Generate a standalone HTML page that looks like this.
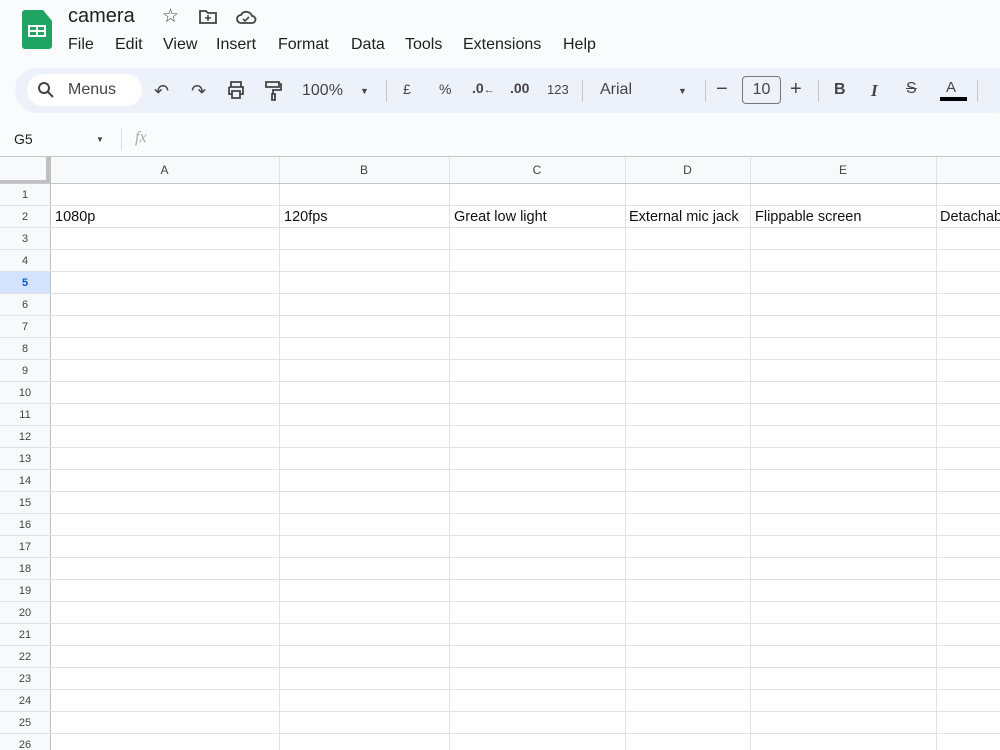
<!DOCTYPE html>
<html><head><meta charset="utf-8"><style>
*{margin:0;padding:0;box-sizing:border-box}
html,body{width:1000px;height:750px;overflow:hidden}
body{background:#f9fbfd;font-family:"Liberation Sans",Arial,sans-serif;color:#1f1f1f;position:relative}
.abs{position:absolute}
.tb{left:15px;top:68px;width:1000px;height:45px;background:#edf2fa;border-radius:22px}
.ic{position:absolute;color:#444;font-size:16px}
.grid{left:0;top:156px;width:1000px;height:594px;background:#fff;overflow:hidden}
.vl{position:absolute;top:0;width:1px;background:#e1e1e1;height:594px}
.hl{position:absolute;left:0;width:1000px;height:1px;background:#e1e1e1}
.rn{position:absolute;left:0;width:50px;text-align:center;font-size:11px;color:#444;height:22px;line-height:22px}
.cl{position:absolute;top:0;height:28px;line-height:28px;text-align:center;font-size:12px;color:#444}
.cell{position:absolute;top:50px;font-size:14.5px;height:22px;line-height:22px;color:#111;white-space:nowrap}
</style></head><body>
<div class="abs" style="left:22px;top:10px;width:30px;height:39px;background:#1fa463;border-radius:3px;clip-path:polygon(0 0,70% 0,100% 28%,100% 100%,0 100%)"></div>
<div class="abs" style="left:28px;top:25px;width:18px;height:12px;border:2px solid #fff;background:linear-gradient(#fff,#fff) 50% 0/2px 100% no-repeat,linear-gradient(#fff,#fff) 0 50%/100% 2px no-repeat"></div>
<div class="abs" style="left:68px;top:5px;font-size:20px;color:#1f1f1f">camera</div>
<div class="abs" style="left:162px;top:5px;font-size:19px;color:#444">☆</div>
<svg class="abs" style="left:198px;top:9px" width="20" height="16" viewBox="0 0 20 16"><path d="M2 2h6l2 2h8v10H2z" fill="none" stroke="#444" stroke-width="1.8"/><path d="M10 6v6M7 9h6" stroke="#444" stroke-width="1.6"/></svg>
<svg class="abs" style="left:235px;top:9px" width="22" height="16" viewBox="0 0 22 16"><path d="M6 14a4 4 0 0 1 0-8 6 6 0 0 1 11 1 3.5 3.5 0 0 1 0 7z" fill="none" stroke="#444" stroke-width="1.8"/><path d="M8 10l2 2 4-4" fill="none" stroke="#444" stroke-width="1.6"/></svg>
<div class="abs" style="left:68px;top:36px;font-size:16px;color:#1f1f1f">
<span class="abs" style="left:0">File</span><span class="abs" style="left:47px">Edit</span><span class="abs" style="left:95px">View</span><span class="abs" style="left:148px">Insert</span><span class="abs" style="left:210px">Format</span><span class="abs" style="left:283px">Data</span><span class="abs" style="left:337px">Tools</span><span class="abs" style="left:395px;white-space:nowrap">Extensions</span><span class="abs" style="left:495px">Help</span></div>
<div class="abs tb"></div>
<div class="abs" style="left:27px;top:74px;width:115px;height:32px;background:#fff;border-radius:16px"></div>
<svg class="abs" style="left:37px;top:81px" width="18" height="18" viewBox="0 0 18 18"><circle cx="7" cy="7" r="5" fill="none" stroke="#444" stroke-width="2"/><path d="M11 11l5 5" stroke="#444" stroke-width="2"/></svg>
<div class="abs" style="left:68px;top:81px;font-size:16px;color:#444">Menus</div>
<div class="ic" style="left:154px;top:81px;font-size:18px">↶</div>
<div class="ic" style="left:191px;top:81px;font-size:18px">↷</div>
<svg class="abs" style="left:226px;top:80px" width="20" height="20" viewBox="0 0 20 20"><path d="M5 7V2h10v5M3 7h14v7h-3M6 14H3V7M6 11h8v7H6z" fill="none" stroke="#444" stroke-width="1.8"/></svg>
<svg class="abs" style="left:264px;top:80px" width="18" height="22" viewBox="0 0 18 22"><path d="M2 2h13v5H2zM15 4h2v6H9v4M8 14h3v6H8z" fill="none" stroke="#444" stroke-width="1.8"/></svg>
<div class="ic" style="left:302px;top:82px;font-size:16px">100%</div>
<div class="ic" style="left:360px;top:86px;font-size:9px">▼</div>
<div class="abs" style="left:386px;top:80px;width:1px;height:22px;background:#c7c7c7"></div>
<div class="ic" style="left:403px;top:81px;font-size:14px">£</div>
<div class="ic" style="left:439px;top:81px;font-size:14px">%</div>
<div class="ic" style="left:472px;top:80px;font-size:14px;font-weight:bold">.0<span style="font-size:11px">←</span></div>
<div class="ic" style="left:510px;top:80px;font-size:14px;font-weight:bold">.00</div>
<div class="ic" style="left:547px;top:82px;font-size:13px">123</div>
<div class="abs" style="left:582px;top:80px;width:1px;height:22px;background:#c7c7c7"></div>
<div class="ic" style="left:600px;top:81px;font-size:16px">Arial</div>
<div class="ic" style="left:678px;top:86px;font-size:9px">▼</div>
<div class="abs" style="left:705px;top:80px;width:1px;height:22px;background:#c7c7c7"></div>
<div class="ic" style="left:716px;top:78px;font-size:20px">−</div>
<div class="abs" style="left:742px;top:76px;width:39px;height:28px;border:1px solid #747775;border-radius:4px;text-align:center;line-height:26px;font-size:16px;color:#444">10</div>
<div class="ic" style="left:790px;top:78px;font-size:20px">+</div>
<div class="abs" style="left:818px;top:80px;width:1px;height:22px;background:#c7c7c7"></div>
<div class="ic" style="left:834px;top:81px;font-size:16px;font-weight:bold">B</div>
<div class="ic" style="left:871px;top:81px;font-size:17px;font-style:italic;font-family:'Liberation Serif',serif;font-weight:bold">I</div>
<div class="ic" style="left:906px;top:80px;font-size:16px;text-decoration:line-through">S</div>
<div class="ic" style="left:946px;top:79px;font-size:15px">A</div>
<div class="abs" style="left:940px;top:97px;width:27px;height:4px;background:#000"></div>
<div class="abs" style="left:977px;top:80px;width:1px;height:22px;background:#c7c7c7"></div>
<div class="abs" style="left:14px;top:131px;font-size:14px;color:#1f1f1f">G5</div>
<div class="abs" style="left:96px;top:135px;font-size:8px;color:#444">▼</div>
<div class="abs" style="left:121px;top:128px;width:1px;height:22px;background:#ddd"></div>
<div class="abs" style="left:135px;top:129px;font-size:16px;color:#aaa;font-style:italic;font-family:'Liberation Serif',serif">fx</div>
<div class="abs grid">
<div class="abs" style="left:0;top:0;width:1000px;height:28px;background:#f8f9fa"></div>
<div class="abs" style="left:0;top:0;width:50px;height:594px;background:#f8f9fa"></div>
<div class="abs" style="left:0;top:116px;width:50px;height:22px;background:#d3e3fd"></div>
<div class="abs" style="left:0;top:0;width:50px;height:28px;border-right:4px solid #c0c0c0;border-bottom:4px solid #c0c0c0"></div>
<div class="vl" style="left:50px;background:#c0c0c0"></div>
<div class="vl" style="left:279px"></div><div class="vl" style="left:449px"></div><div class="vl" style="left:625px"></div><div class="vl" style="left:750px"></div><div class="vl" style="left:936px"></div>
<div class="hl" style="top:0;background:#c7c7c7"></div>
<div class="hl" style="top:27px;background:#c7c7c7"></div>
<div class="cl" style="left:50px;width:229px">A</div><div class="cl" style="left:279px;width:170px">B</div><div class="cl" style="left:449px;width:176px">C</div><div class="cl" style="left:625px;width:125px">D</div><div class="cl" style="left:750px;width:186px">E</div>
<div class="cell" style="left:55px">1080p</div><div class="cell" style="left:284px">120fps</div><div class="cell" style="left:454px">Great low light</div><div class="cell" style="left:629px">External mic jack</div><div class="cell" style="left:755px">Flippable screen</div><div class="cell" style="left:940px">Detachable</div>
<div id="rows"></div>
</div>
<script>
var r=document.getElementById('rows'),h='';
for(var i=1;i<=26;i++){var t=28+(i-1)*22;h+='<div class="hl" style="top:'+(t+21)+'px"></div><div class="rn" style="top:'+t+'px'+(i==5?';color:#0b57d0;font-weight:bold':'')+'">'+i+'</div>';}
r.innerHTML=h;
</script>
</body></html>
